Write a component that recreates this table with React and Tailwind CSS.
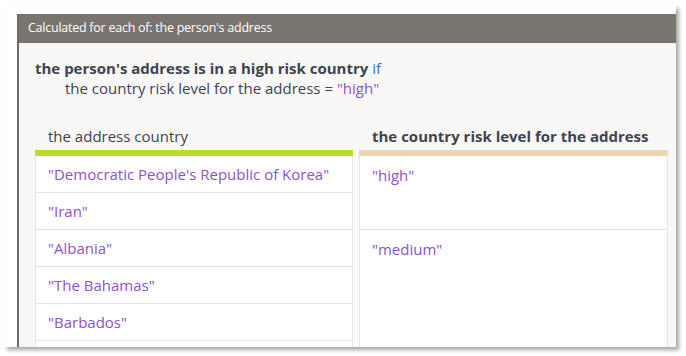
const countries = [
  '"Democratic People\'s Republic of Korea"',
  '"Iran"',
  '"Albania"',
  '"The Bahamas"',
  '"Barbados"',
  '',
];

const font = { fontFamily: '"Open Sans", "Noto Sans", sans-serif' };

export default function App() {
  return (
    <div className="w-[686px] h-[356px] bg-white overflow-hidden" style={font}>
      {/* card */}
      <div className="ml-[4px] mt-[5px] w-[672px] h-[342px] bg-white shadow-[3px_3px_4px_rgba(0,0,0,0.35)] pl-[13px] pt-[9px] overflow-hidden">
        <div className="h-full bg-[#f9f8f6] border-l-2 border-[#6f6a65] flex flex-col">
          {/* header bar */}
          <div className="h-[29px] shrink-0 bg-[#7a746e] text-white text-[12.5px] pl-[9px] flex items-center tracking-[-0.25px]">
            Calculated for each of: the person's address
          </div>

          <div className="pl-[16px] pr-[8px] pt-[15px]">
            {/* rule */}
            <div className="text-[15px] leading-[20px] text-[#3d4450]">
              <div>
                <span className="font-bold">the person's address is in a high risk country</span>{' '}
                <span className="text-[#2b79a8]">if</span>
              </div>
              <div className="pl-[30px]">
                the country risk level for the address = <span className="text-[#8e52cc]">"high"</span>
              </div>
            </div>

            {/* table */}
            <div className="mt-[24px] flex gap-[6px]">
              <div className="w-[318px] shrink-0">
                <div className="h-[28px] pl-[13px] flex items-center text-[15px] text-[#3d4450]">
                  the address country
                </div>
                <div className="h-[6px] bg-[#b6de27]" />
                <div className="bg-white border-x border-[#e6e6e6]">
                  {countries.map((c, i) => (
                    <div
                      key={i}
                      className="h-[37px] border-b border-[#e2e2e2] pl-[12px] flex items-center text-[15px] text-[#8e52cc]"
                    >
                      {c}
                    </div>
                  ))}
                </div>
              </div>

              <div className="flex-1">
                <div className="h-[28px] pl-[13px] flex items-center text-[15px] font-bold text-[#3d4450]">
                  the country risk level for the address
                </div>
                <div className="h-[6px] bg-[#eed5b1]" />
                <div className="bg-white border-x border-[#e6e6e6]">
                  <div className="h-[74px] border-b border-[#e2e2e2] pl-[12px] pt-[8px] text-[15px] text-[#8e52cc]">
                    "high"
                  </div>
                  <div className="h-[160px] pl-[12px] pt-[8px] text-[15px] text-[#8e52cc]">
                    "medium"
                  </div>
                </div>
              </div>
            </div>
          </div>
        </div>
      </div>
    </div>
  );
}
